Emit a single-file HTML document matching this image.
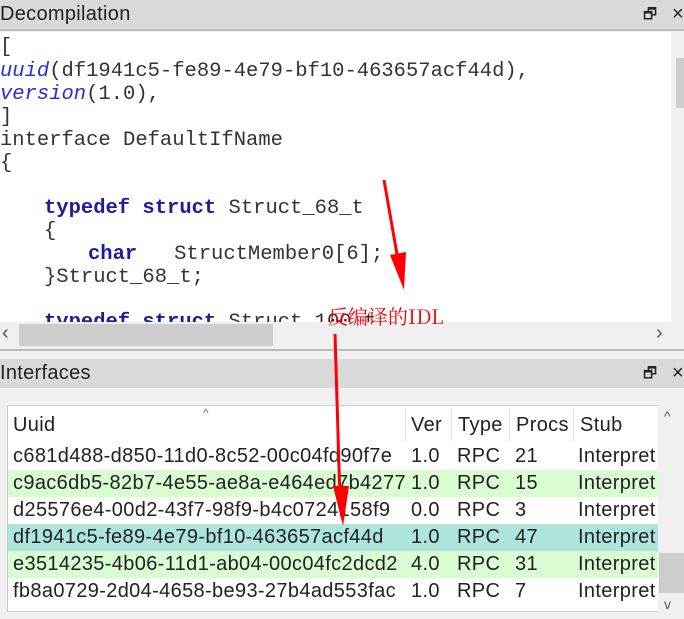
<!DOCTYPE html>
<html><head><meta charset="utf-8"><style>
body{margin:0;width:684px;height:619px;overflow:hidden;background:#f0f0f0;position:relative;font-family:"Segoe UI","Liberation Sans",sans-serif;}
.bar{position:absolute;left:0;width:684px;height:29px;background:#d9d9d9;font-size:20px;letter-spacing:0.3px;color:#222;line-height:29px;}
.code{position:absolute;left:0;top:32px;width:671px;height:290px;background:#fff;overflow:hidden;font-family:"Liberation Mono",monospace;font-size:20.5px;color:#333;}
.code div{position:absolute;white-space:pre;line-height:23px;}
.it{color:#2a2ae0;font-style:italic}
.kw{color:#1c1c9c;font-weight:bold}
.tbl{position:absolute;left:7px;top:405px;width:665px;height:205px;background:#fff;border:1px solid #ccc;overflow:hidden;font-size:20px;letter-spacing:0.35px;color:#222;}
.row{position:absolute;left:0;width:650px;height:27px;line-height:27px;white-space:nowrap;}
.row span{position:absolute;}
</style></head><body>
<div class="bar" style="top:0">Decompilation<span style="position:absolute;left:643px;font-size:15px">🗗</span><span style="position:absolute;left:672px">×</span></div>
<div style="position:absolute;left:0;top:29px;width:684px;height:2px;background:#bbb"></div>
<div class="code">
<div style="top:4px;left:0">[</div>
<div style="top:28px;left:0"><span class="it">uuid</span>(df1941c5-fe89-4e79-bf10-463657acf44d),</div>
<div style="top:51px;left:0"><span class="it">version</span>(1.0),</div>
<div style="top:74px;left:0">]</div>
<div style="top:97px;left:0">interface DefaultIfName</div>
<div style="top:120px;left:0">{</div>
<div style="top:165px;left:44px"><span class="kw">typedef struct</span> Struct_68_t</div>
<div style="top:188px;left:44px">{</div>
<div style="top:211px;left:88px"><span class="kw">char</span>   StructMember0[6];</div>
<div style="top:234px;left:44px">}Struct_68_t;</div>
<div style="top:279px;left:44px"><span class="kw">typedef struct</span> Struct_100_t</div>
</div>
<div style="position:absolute;left:672px;top:32px;width:12px;height:290px;background:#f0f0f0"></div>
<div style="position:absolute;left:676px;top:58px;width:8px;height:50px;background:#cdcdcd"></div>
<div style="position:absolute;left:0;top:322px;width:684px;height:26px;background:#f0f0f0"></div>
<div style="position:absolute;left:19px;top:324px;width:254px;height:22px;background:#cdcdcd"></div>
<div style="position:absolute;left:2px;top:322px;font-size:20px;color:#555">‹</div>
<div style="position:absolute;left:656px;top:322px;font-size:20px;color:#555">›</div>
<div style="position:absolute;left:0;top:349px;width:684px;height:2px;background:#bbb"></div>
<div class="bar" style="top:359px">Interfaces<span style="position:absolute;left:643px;font-size:15px">🗗</span><span style="position:absolute;left:672px">×</span></div>
<div class="tbl">
<div class="row" style="top:2px;height:34px;line-height:34px;width:665px"><span style="left:5px">Uuid</span><span style="left:195px;top:-12px;font-size:12px;color:#777">^</span><span style="left:397px;border-left:1px solid #e3e3e3;padding-left:5px">Ver</span><span style="left:443px;border-left:1px solid #e3e3e3;padding-left:6px">Type</span><span style="left:501px;border-left:1px solid #e3e3e3;padding-left:6px">Procs</span><span style="left:565px;border-left:1px solid #e3e3e3;padding-left:6px">Stub</span></div>
<div class="row" style="top:37px"><span style="left:5px">c681d488-d850-11d0-8c52-00c04fd90f7e</span><span style="left:403px">1.0</span><span style="left:449px">RPC</span><span style="left:507px">21</span><span style="left:570px">Interpret</span></div>
<div class="row" style="top:64px;background:#d9fcd3"><span style="left:5px">c9ac6db5-82b7-4e55-ae8a-e464ed7b4277</span><span style="left:403px">1.0</span><span style="left:449px">RPC</span><span style="left:507px">15</span><span style="left:570px">Interpret</span></div>
<div class="row" style="top:91px"><span style="left:5px">d25576e4-00d2-43f7-98f9-b4c0724158f9</span><span style="left:403px">0.0</span><span style="left:449px">RPC</span><span style="left:507px">3</span><span style="left:570px">Interpret</span></div>
<div class="row" style="top:118px;background:#ade5de"><span style="left:5px">df1941c5-fe89-4e79-bf10-463657acf44d</span><span style="left:403px">1.0</span><span style="left:449px">RPC</span><span style="left:507px">47</span><span style="left:570px">Interpret</span></div>
<div class="row" style="top:145px;background:#d9fcd3"><span style="left:5px">e3514235-4b06-11d1-ab04-00c04fc2dcd2</span><span style="left:403px">4.0</span><span style="left:449px">RPC</span><span style="left:507px">31</span><span style="left:570px">Interpret</span></div>
<div class="row" style="top:172px"><span style="left:5px">fb8a0729-2d04-4658-be93-27b4ad553fac</span><span style="left:403px">1.0</span><span style="left:449px">RPC</span><span style="left:507px">7</span><span style="left:570px">Interpret</span></div>
</div>
<div style="position:absolute;left:658px;top:405px;width:26px;height:210px;background:#f0f0f0"></div>
<div style="position:absolute;left:659px;top:553px;width:25px;height:40px;background:#cdcdcd"></div>
<div style="position:absolute;left:664px;top:408px;font-size:14px;color:#555">^</div>
<div style="position:absolute;left:664px;top:596px;font-size:14px;color:#555">v</div>
<div style="position:absolute;left:328px;top:303px;font-size:20px;color:#f00;font-family:'Noto Serif CJK SC','Liberation Serif',serif;line-height:26px">反编译的IDL</div>
<svg style="position:absolute;left:0;top:0" width="684" height="619">
<line x1="384" y1="180" x2="398" y2="260" stroke="#f00" stroke-width="3"/>
<polygon points="390,255 406,252 404,290" fill="#f00"/>
<line x1="335" y1="334" x2="340" y2="500" stroke="#f00" stroke-width="3"/>
<polygon points="333,486 349,486 343,526" fill="#f00"/>
</svg>
</body></html>
